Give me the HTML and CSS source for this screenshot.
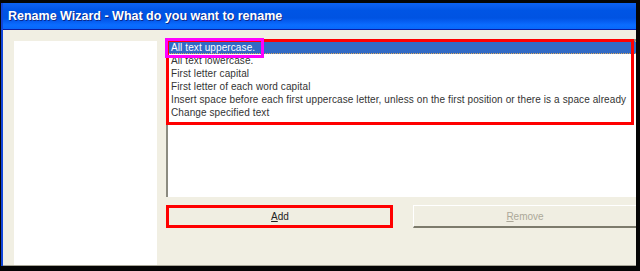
FILE: index.html
```html
<!DOCTYPE html>
<html>
<head>
<meta charset="utf-8">
<link rel="stylesheet" href="styles.css">
</head>
<body>
<div class="screen">
  <div class="window">
    <div class="titlebar"><span class="title">Rename Wizard - What do you want to rename</span></div>
    <div class="body">
      <div class="leftpanel"></div>
      <div class="main">
        <div class="listbox">
          <div class="item selected">All text uppercase.</div>
          <div class="item">All text lowercase.</div>
          <div class="item">First letter capital</div>
          <div class="item">First letter of each word capital</div>
          <div class="item">Insert space before each first uppercase letter, unless on the first position or there is a space already</div>
          <div class="item">Change specified text</div>
        </div>
        <div class="buttons">
          <div class="btn"><span class="ul">A</span>dd</div>
          <div class="btn disabled"><span class="ul">R</span>emove</div>
        </div>
      </div>
    </div>
  </div>
  <div class="mark mark-list"></div>
  <div class="mark mark-sel"></div>
  <div class="mark mark-add"></div>
</div>
</body>
</html>
```

FILE: styles.css
```css
html, body {
  margin: 0;
  padding: 0;
  background: #000;
}
.screen {
  position: relative;
  width: 640px;
  height: 271px;
  box-sizing: border-box;
  padding: 3px 4px 5px 1px;
  background: #050505;
  display: flex;
  overflow: hidden;
}
.window {
  flex: 1;
  display: flex;
  flex-direction: column;
  border-left: 2px solid #1246d8;
  overflow: hidden;
}
.titlebar {
  height: 26px;
  flex: none;
  border-bottom: 1px solid #0a1ea6;
  background: linear-gradient(to bottom, #0b63f2 0, #0a5cec 3px, #0055e5 7px, #0053e2 15px, #0760f4 19px, #0a6dff 22px, #0868fa 26px);
  display: flex;
  align-items: center;
  padding-left: 5px;
}
.title {
  font-family: "Liberation Sans", Arial, sans-serif;
  font-weight: bold;
  font-size: 12.5px;
  color: #fff;
  text-shadow: 1px 1px 0 #0a2a8c;
}
.body {
  flex: 1;
  display: flex;
  background: #f1efe3;
  padding: 9px 0 0 11px;
  border-bottom: 1px solid #a7a597;
}
.leftpanel {
  width: 143px;
  margin-top: 2px;
  background: #fff;
}
.main {
  flex: 1;
  margin-left: 9px;
  display: flex;
  flex-direction: column;
  min-width: 0;
}
.listbox {
  height: 156px;
  border-top: 2px solid #8c8b80;
  border-left: 2px solid #8c8b80;
  background: #fff;
  font-family: "Liberation Sans", Arial, sans-serif;
  font-size: 10px;
  letter-spacing: 0.1px;
  color: #333;
}
.item {
  height: 13px;
  line-height: 13px;
  padding-left: 3px;
  white-space: nowrap;
}
.item.selected {
  background: #316ac5;
  color: #fff;
  box-sizing: border-box;
  border-top: 1px dotted #d8a860;
  border-bottom: 1px dotted #d8a860;
  line-height: 11px;
}
.buttons {
  display: grid;
  grid-template-columns: 227px 1fr;
  column-gap: 20px;
  margin-top: 8px;
}
.btn {
  height: 23px;
  box-sizing: border-box;
  background: #f0eee2;
  border-top: 1px solid #fff;
  border-left: 1px solid #fff;
  border-bottom: 2px solid #7d7b6c;
  display: flex;
  align-items: center;
  justify-content: center;
  font-family: "Liberation Sans", Arial, sans-serif;
  font-size: 10px;
  color: #222;
}
.btn.disabled {
  color: #aca899;
}
.ul {
  text-decoration: underline;
}
.mark {
  position: absolute;
  box-sizing: border-box;
}
.mark-list {
  left: 166px;
  top: 39px;
  width: 468px;
  height: 86px;
  border: 3px solid #ff0000;
}
.mark-sel {
  left: 165px;
  top: 38px;
  width: 99px;
  height: 20px;
  border: 3px solid #ff00ff;
}
.mark-add {
  left: 166px;
  top: 205px;
  width: 227px;
  height: 23px;
  border: 3px solid #ff0000;
}
```
